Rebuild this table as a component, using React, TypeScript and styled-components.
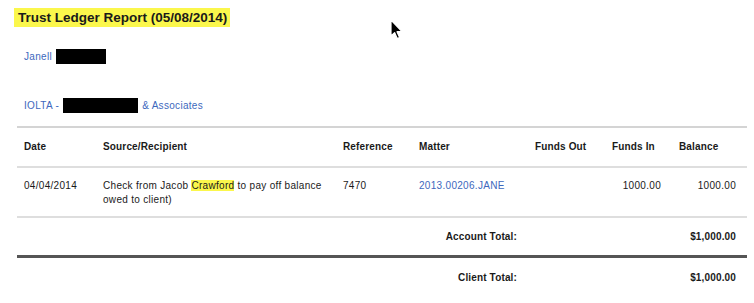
import styled, { createGlobalStyle } from "styled-components";

const GlobalStyle = createGlobalStyle`
  html, body {
    margin: 0;
    background: #fff;
  }
  body {
    font-family: "Liberation Sans", Arial, sans-serif;
    color: #1a1a1a;
  }
`;

const Page = styled.div`
  position: relative;
  width: 754px;
  height: 303px;
  overflow: hidden;
  padding-top: 8px;
  box-sizing: border-box;
`;

const Title = styled.h1`
  display: inline-block;
  margin: 0 0 0 14px;
  padding: 0 3px 0 4px;
  height: 19px;
  line-height: 19px;
  font-size: 13.5px;
  font-weight: bold;
  background: #fbf74c;
  color: #1a1a1a;
`;

const Party = styled.div<{ $gap: number }>`
  display: flex;
  align-items: center;
  margin: ${(p) => p.$gap}px 0 0 24px;
  height: 16px;
  font-size: 10px;
  letter-spacing: 0.3px;
  color: #3d68bd;
`;

const Redacted = styled.span<{ $w: number; $lead?: number }>`
  display: inline-block;
  width: ${(p) => p.$w}px;
  height: 15px;
  background: #000;
  margin: 0 4px 0 ${(p) => p.$lead ?? 1}px;
`;

const Ledger = styled.div`
  margin: 13px 7px 0 17px;
  border-top: 2px solid #d4d4d4;
  font-size: 10px;
`;

const cols = "79px 240px 76px 116px 77px 67px 75px";

const Row = styled.div<{ $h: number; $line?: "light" | "dark" | "none" }>`
  display: grid;
  grid-template-columns: ${cols};
  height: ${(p) => p.$h}px;
  box-sizing: border-box;
  border-bottom: ${(p) =>
    p.$line === "dark"
      ? "3px solid #555"
      : p.$line === "none"
      ? "0"
      : "2px solid #dedede"};
`;

const Cell = styled.div<{ $align?: "left" | "right"; $bold?: boolean; $top?: boolean }>`
  padding: ${(p) => (p.$top ? "11px" : "0")} 11px 0 7px;
  display: flex;
  align-items: ${(p) => (p.$top ? "flex-start" : "center")};
  justify-content: ${(p) => (p.$align === "right" ? "flex-end" : "flex-start")};
  text-align: ${(p) => p.$align || "left"};
  font-weight: ${(p) => (p.$bold ? "bold" : "normal")};
  letter-spacing: ${(p) => (p.$bold ? "0.15px" : "0.3px")};
  line-height: 14px;
  color: #1a1a1a;
`;

const MatterLink = styled.span`
  color: #3d68bd;
`;

const Mark = styled.span`
  background: #fbf74c;
`;

const Cursor = styled.svg`
  position: absolute;
  left: 389px;
  top: 19px;
`;

function ArrowCursor() {
  return (
    <Cursor width="14" height="22" viewBox="0 0 14 22">
      <path
        d="M2 1 L2 17 L5.6 13.6 L8.2 19.6 L10.6 18.6 L8 12.7 L13 12.7 Z"
        fill="#000"
        stroke="#fff"
        strokeWidth="1.2"
        strokeLinejoin="round"
      />
    </Cursor>
  );
}

const headers = ["Date", "Source/Recipient", "Reference", "Matter", "Funds Out", "Funds In", "Balance"];

function TotalRow({ label, amount, line }: { label: string; amount: string; line: "dark" | "none" }) {
  return (
    <Row $h={40} $line={line}>
      <Cell />
      <Cell />
      <Cell />
      <Cell $align="right" $bold>
        {label}
      </Cell>
      <Cell />
      <Cell />
      <Cell $align="right" $bold>
        {amount}
      </Cell>
    </Row>
  );
}

export default function App() {
  return (
    <>
      <GlobalStyle />
      <Page>
        <Title>Trust Ledger Report (05/08/2014)</Title>
        <Party $gap={21}>
          Janell
          <Redacted $w={50} $lead={4} />
        </Party>
        <Party $gap={33}>
          IOLTA -&nbsp;
          <Redacted $w={75} />
          &amp; Associates
        </Party>
        <Ledger>
          <Row $h={40}>
            {headers.map((h) => (
              <Cell key={h} $bold>
                {h}
              </Cell>
            ))}
          </Row>
          <Row $h={50}>
            <Cell $top>04/04/2014</Cell>
            <Cell $top>
              <span>
                Check from Jacob <Mark>Crawford</Mark> to pay off balance owed to client)
              </span>
            </Cell>
            <Cell $top>7470</Cell>
            <Cell $top>
              <MatterLink>2013.00206.JANE</MatterLink>
            </Cell>
            <Cell $top $align="right" />
            <Cell $top $align="right">
              1000.00
            </Cell>
            <Cell $top $align="right">
              1000.00
            </Cell>
          </Row>
          <TotalRow label="Account Total:" amount="$1,000.00" line="dark" />
          <TotalRow label="Client Total:" amount="$1,000.00" line="none" />
        </Ledger>
        <ArrowCursor />
      </Page>
    </>
  );
}
